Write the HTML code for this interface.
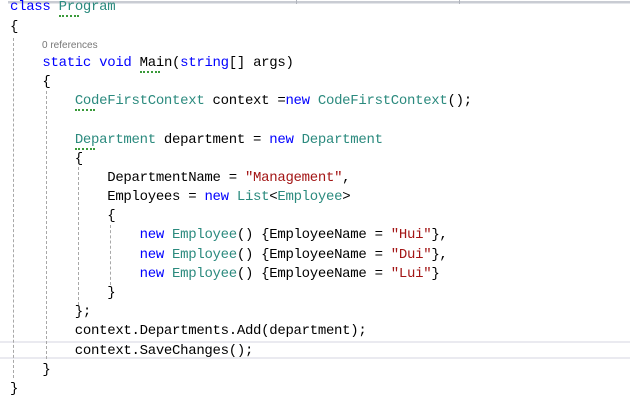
<!DOCTYPE html>
<html><head><style>
html,body{margin:0;padding:0;width:630px;height:413px;overflow:hidden;background:#fff;position:relative}
.topbar{position:absolute;left:8px;top:1px;width:622px;height:2px;background:#c9ccd3;border-bottom:1px solid #e4e6ea}
.div{position:absolute;top:0;width:1px;height:4px;background:#b0b4bc}
.code{position:absolute;left:10px;top:-1.6px;font-family:"Liberation Mono",monospace;font-size:14px;letter-spacing:-0.3px;color:#000}
.l{height:19.2px;line-height:19.2px;white-space:pre}
.r{height:17px;line-height:17px;font-family:"Liberation Sans",sans-serif;font-size:10px;letter-spacing:0;color:#777;padding-left:32px;white-space:pre}
.k{color:#0000ff}.t{color:#2b8a7e}.s{color:#a31515}
.q{position:relative}
.q::after{content:"";position:absolute;left:0;bottom:-2px;width:20px;border-bottom:2px dotted #3a9a3a}
.g{position:absolute;width:0;border-left:1px dashed #a8a8a8}
.cur{position:absolute;left:0;top:341px;width:630px;height:18px;border-top:2px solid #eaeaf0;border-bottom:2px solid #eaeaf0;box-sizing:border-box}
</style></head><body>
<div class="topbar"></div>
<div class="div" style="left:296px"></div>
<div class="div" style="left:459px"></div>
<div class="cur"></div>
<div class="g" style="left:13px;top:38px;height:340px"></div>
<div class="g" style="left:46px;top:91px;height:268px"></div>
<div class="g" style="left:78px;top:167px;height:138px"></div>
<div class="g" style="left:110px;top:225px;height:60px"></div>
<div class="code"><div class="l"><span class="k">class</span> <span class="t q">Program</span></div><div class="l">{</div><div class="r">0 references</div><div class="l">    <span class="k">static</span> <span class="k">void</span> <span class="q">Main</span>(<span class="k">string</span>[] args)</div><div class="l">    {</div><div class="l">        <span class="t q">CodeFirstContext</span> context =<span class="k">new</span> <span class="t">CodeFirstContext</span>();</div><div class="l"> </div><div class="l">        <span class="t q">Department</span> department = <span class="k">new</span> <span class="t">Department</span></div><div class="l">        {</div><div class="l">            DepartmentName = <span class="s">"Management"</span>,</div><div class="l">            Employees = <span class="k">new</span> <span class="t">List</span>&lt;<span class="t">Employee</span>&gt;</div><div class="l">            {</div><div class="l">                <span class="k">new</span> <span class="t">Employee</span>() {EmployeeName = <span class="s">"Hui"</span>},</div><div class="l">                <span class="k">new</span> <span class="t">Employee</span>() {EmployeeName = <span class="s">"Dui"</span>},</div><div class="l">                <span class="k">new</span> <span class="t">Employee</span>() {EmployeeName = <span class="s">"Lui"</span>}</div><div class="l">            }</div><div class="l">        };</div><div class="l">        context.Departments.Add(department);</div><div class="l">        context.SaveChanges();</div><div class="l">    }</div><div class="l">}</div></div>
</body></html>
